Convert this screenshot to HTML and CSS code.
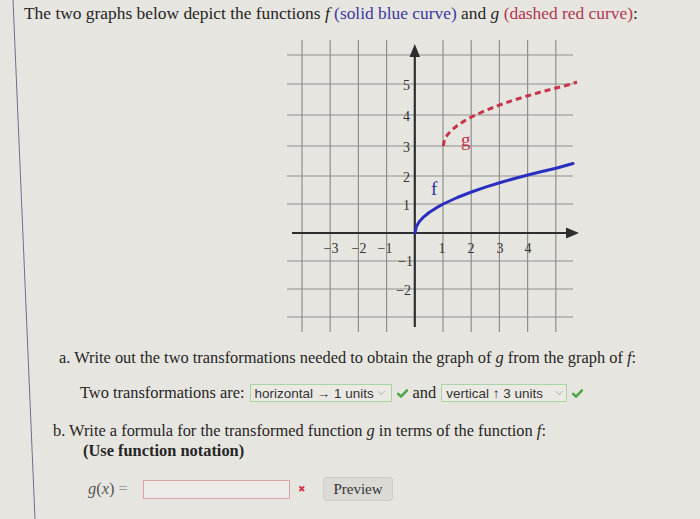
FILE: index.html
```html
<!DOCTYPE html>
<html>
<head>
<meta charset="utf-8">
<link rel="stylesheet" href="styles.css">
</head>
<body>
<svg class="edge" width="700" height="519" viewBox="0 0 700 519"><line x1="13" y1="0" x2="35" y2="519" stroke="#6f6f8c" stroke-width="1"/></svg>
<div class="page">
  <p class="title">The two graphs below depict the functions <i>f</i> <span class="blue">(solid blue curve)</span> and <i>g</i> <span class="red">(dashed red curve)</span>:</p>
  <div class="graph">
    <svg width="310" height="300" viewBox="280 38 310 300">
      <g stroke="#908f8b" stroke-width="1.2">
        <line x1="302" y1="40" x2="302" y2="332"/>
        <line x1="330.2" y1="40" x2="330.2" y2="332"/>
        <line x1="358.4" y1="40" x2="358.4" y2="332"/>
        <line x1="386.6" y1="40" x2="386.6" y2="332"/>
        <line x1="443" y1="40" x2="443" y2="332"/>
        <line x1="471.2" y1="40" x2="471.2" y2="332"/>
        <line x1="499.4" y1="40" x2="499.4" y2="332"/>
        <line x1="527.6" y1="40" x2="527.6" y2="332"/>
        <line x1="555.8" y1="40" x2="555.8" y2="332"/>
        <line x1="287" y1="55" x2="573" y2="55"/>
        <line x1="287" y1="84" x2="573" y2="84"/>
        <line x1="287" y1="115" x2="573" y2="115"/>
        <line x1="287" y1="146" x2="573" y2="146"/>
        <line x1="287" y1="176" x2="573" y2="176"/>
        <line x1="287" y1="204" x2="573" y2="204"/>
        <line x1="287" y1="261" x2="573" y2="261"/>
        <line x1="287" y1="289" x2="573" y2="289"/>
        <line x1="287" y1="317" x2="573" y2="317"/>
      </g>
      <g stroke="#2e2e2e" stroke-width="2.2">
        <line x1="414.8" y1="52" x2="414.8" y2="327"/>
        <line x1="292" y1="233" x2="568" y2="233"/>
      </g>
      <polygon points="414.8,44 409.5,57 420,57" fill="#2e2e2e"/>
      <polygon points="579,233 566,227.5 566,238.5" fill="#2e2e2e"/>
      <g class="lbl" text-anchor="end">
        <text x="410" y="90">5</text>
        <text x="410" y="121">4</text>
        <text x="410" y="152">3</text>
        <text x="410" y="182">2</text>
        <text x="410" y="210">1</text>
        <text x="413" y="266">−1</text>
        <text x="411" y="295">−2</text>
      </g>
      <g class="lbl" text-anchor="middle">
        <text x="331" y="253">−3</text>
        <text x="359" y="253">−2</text>
        <text x="385" y="253">−1</text>
        <text x="442" y="253">1</text>
        <text x="471" y="253">2</text>
        <text x="500" y="253">3</text>
        <text x="528" y="253">4</text>
      </g>
      <polyline fill="none" stroke="#2a2fc0" stroke-width="3" stroke-linecap="round" stroke-linejoin="round" points="415,233 416.4,226.5 419.2,221.8 423.5,217.1 429.1,212.5 436.2,207.9 443.2,204 457.3,197.5 471.4,192 485.5,187.1 499.6,182.8 513.7,178.7 527.8,175 541.9,171.5 556,168.2 573,163.5"/>
      <polyline fill="none" stroke="#c9344d" stroke-width="3" stroke-dasharray="6 4" points="443.2,146 444.6,139.5 447.4,134.8 451.7,130.1 457.3,125.5 464.4,120.9 471.4,117 485.5,110.5 499.6,105 513.7,100.1 527.8,95.8 541.9,91.7 556,88 570.1,84.5 577,82"/>
      <text class="fl" x="431" y="195">f</text>
      <text class="gl" x="461" y="146">g</text>
    </svg>
  </div>
  <p class="parta">a. Write out the two transformations needed to obtain the graph of <i>g</i> from the graph of <i>f</i>:</p>
  <div class="rowa">
    <span>Two transformations are:</span>
    <span class="sel sel1">horizontal → 1 units<span class="chev">⌵</span></span>
    <svg class="ok" width="11" height="9" viewBox="0 0 11 9"><path d="M1 4.8 L4 7.6 L10 1.4" fill="none" stroke="#4caa4a" stroke-width="2.6" stroke-linecap="round" stroke-linejoin="round"/></svg>
    <span class="and">and</span>
    <span class="sel sel2">vertical ↑ 3 units<span class="chev">⌵</span></span>
    <svg class="ok" width="11" height="9" viewBox="0 0 11 9"><path d="M1 4.8 L4 7.6 L10 1.4" fill="none" stroke="#4caa4a" stroke-width="2.6" stroke-linecap="round" stroke-linejoin="round"/></svg>
  </div>
  <p class="partb">b. Write a formula for the transformed function <i>g</i> in terms of the function <i>f</i>:</p>
  <p class="note">(Use function notation)</p>
  <div class="answer">
    <span class="gx"><i>g</i>(<i>x</i>) <span class="eq">=</span></span>
    <span class="input"></span>
    <span class="bad">✖</span>
    <span class="btn">Preview</span>
  </div>
</div>
</body>
</html>
```
FILE: styles.css
```css
html, body {
  margin: 0;
  padding: 0;
  background: #e7e5e0;
}
body {
  width: 700px;
  height: 519px;
  overflow: hidden;
  position: relative;
  font-family: "Liberation Serif", "Times New Roman", serif;
  color: #262626;
}
.edge {
  position: absolute;
  left: 0;
  top: 0;
  pointer-events: none;
}
.page {
  display: flex;
  flex-direction: column;
}
p { margin: 0; }
.title {
  font-size: 17.4px;
  line-height: 20px;
  margin: 3px 0 0 24px;
}
.blue { color: #3a3a9c; }
.red { color: #b0384f; }
.graph {
  margin: 15px 0 0 280px;
  height: 300px;
}
.graph svg { display: block; }
.lbl text {
  font-family: "Liberation Serif", serif;
  font-size: 14px;
  fill: #333;
}
.fl {
  font-family: "Liberation Serif", serif;
  font-size: 19px;
  fill: #2a2fa8;
}
.gl {
  font-family: "Liberation Serif", serif;
  font-size: 19px;
  fill: #c03048;
}
.parta {
  font-size: 16.4px;
  line-height: 20px;
  margin: 10px 0 0 59px;
}
.rowa {
  display: flex;
  align-items: center;
  margin: 15px 0 0 80px;
  font-size: 16.4px;
  height: 20px;
}
.sel {
  display: inline-flex;
  align-items: center;
  box-sizing: border-box;
  height: 18px;
  border: 1px solid #a9d4a4;
  background: #ebe9e4;
  font-family: "Liberation Sans", Arial, sans-serif;
  font-size: 13.5px;
  color: #333;
  padding: 0 3px 0 4px;
  margin-left: 5px;
}
.sel1 { width: 142px; }
.sel2 { width: 126px; justify-content: space-between; }
.chev {
  color: #999;
  font-size: 11px;
  margin-left: 3px;
  margin-top: -4px;
}
.ok {
  margin-left: 5px;
  display: block;
}
.and { margin-left: 5px; }
.partb {
  font-size: 16.4px;
  line-height: 20px;
  margin: 18px 0 0 53px;
}
.note {
  font-size: 16.4px;
  line-height: 20px;
  font-weight: bold;
  margin: 0 0 0 83px;
}
.answer {
  display: flex;
  align-items: center;
  margin: 16px 0 0 88px;
  height: 24px;
}
.gx {
  font-size: 16.4px;
  color: #555;
  width: 55px;
}
.eq { color: #999; }
.input {
  box-sizing: border-box;
  width: 147px;
  height: 19px;
  border: 1px solid #d9a3a6;
  background: #ecebe7;
}
.bad {
  color: #d23a48;
  font-size: 9px;
  margin-left: 8px;
}
.btn {
  box-sizing: border-box;
  width: 70px;
  height: 24px;
  margin-left: 17px;
  background: #dcdad5;
  border: 1px solid #cfcdc8;
  border-radius: 3px;
  font-size: 15px;
  color: #333;
  display: flex;
  align-items: center;
  justify-content: center;
}
```
